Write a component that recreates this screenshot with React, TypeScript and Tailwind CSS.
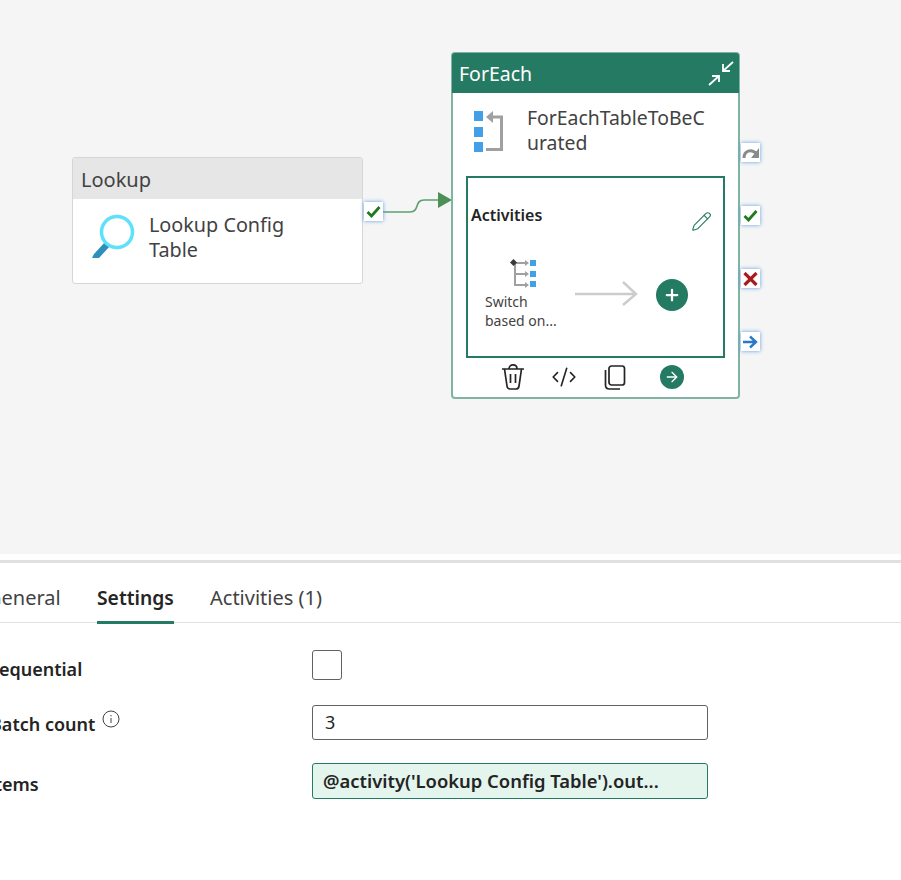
import { CodeXml, Pencil, Plus, ArrowRight } from 'lucide-react';

const font = "font-['Noto_Sans',sans-serif]";

function LookupIcon() {
  return (
    <svg width="44" height="46" viewBox="0 0 44 46" className="shrink-0">
      <path d="M15 28 L3 41 L1 45 L8 45 L19 33 Z" fill="#2d8fbb" />
      <circle cx="26" cy="19" r="15.5" fill="#fff" stroke="#5fe0fb" strokeWidth="3.5" />
    </svg>
  );
}

function ForEachIcon() {
  return (
    <svg width="32" height="42" viewBox="0 0 32 42" className="shrink-0">
      <rect x="0" y="0" width="9" height="10" fill="#42a0e8" />
      <rect x="0" y="16" width="9" height="10" fill="#42a0e8" />
      <rect x="0" y="31" width="9" height="10" fill="#42a0e8" />
      <path d="M12 38.5 H27.5 V6 H17" fill="none" stroke="#a0a0a0" strokeWidth="3" />
      <path d="M19 0 L12 6 L19 12 Z" fill="#a0a0a0" />
    </svg>
  );
}

function CollapseIcon() {
  return (
    <svg width="30" height="30" viewBox="0 0 30 30" fill="none" stroke="#ffffff" strokeWidth="1.8" className="mr-[3px] -mt-[1px]">
      <path d="M3 26 L13 17 M6 17 H13 V23" />
      <path d="M27 3 L17 12 M17 5 V12 H24" />
    </svg>
  );
}

function SwitchIcon() {
  return (
    <svg width="28" height="30" viewBox="0 0 28 30">
      <path d="M4 5 H18 M6 5 V27 H18 M6 16 H18" fill="none" stroke="#a0a0a0" strokeWidth="2" />
      <path d="M16 2 L20 5 L16 8 Z M16 13 L20 16 L16 19 Z M16 24 L20 27 L16 30 Z" fill="#a0a0a0" />
      <path d="M4.5 1 L8 4.5 L4.5 8 L1 4.5 Z" fill="#3a3a3a" />
      <rect x="21" y="2" width="6" height="6" fill="#42a0e8" />
      <rect x="21" y="13" width="6" height="6" fill="#42a0e8" />
      <rect x="21" y="23" width="6" height="6" fill="#42a0e8" />
    </svg>
  );
}

function Port({ className, children }: { className: string; children: React.ReactNode }) {
  return (
    <div className={`absolute w-[19px] h-[19px] bg-white flex items-center justify-center shadow-[0_0_4px_#5f9ae2] ${className}`}>
      {children}
    </div>
  );
}

function Check() {
  return (
    <svg width="15" height="13" viewBox="0 0 15 13">
      <path d="M1.5 7 L5.5 11 L13.5 2" fill="none" stroke="#1f7a1f" strokeWidth="2.8" />
    </svg>
  );
}

function TrashIcon() {
  return (
    <svg width="24" height="26" viewBox="0 0 24 26" fill="none" stroke="#242424" strokeWidth="1.7">
      <path d="M1 5 H23 M8 5 C8 -0.5 16 -0.5 16 5 M3.5 5 L6 22 C6.3 24 7.5 25 9 25 H15 C16.5 25 17.7 24 18 22 L20.5 5 M9.5 10 V19 M14.5 10 V19" />
    </svg>
  );
}

function CopyIcon() {
  return (
    <svg width="22" height="25" viewBox="0 0 22 25" fill="none" stroke="#242424" strokeWidth="1.7">
      <rect x="5" y="1" width="15.5" height="19" rx="2.5" />
      <path d="M1.5 5 V20 C1.5 22.5 3 24 5.5 24 H16" />
    </svg>
  );
}

export default function App() {
  return (
    <div className={`${font} w-[901px] h-[880px] bg-white overflow-hidden text-[#242424]`}>
      <div className="relative h-[554px] bg-[#f5f5f5]">
        {/* connector */}
        <svg width="80" height="30" viewBox="0 0 80 30" className="absolute left-[380px] top-[188px]">
          <path d="M3 24 H30 C40 24 34 12 44 12 H60" fill="none" stroke="#5f9f6f" strokeWidth="1.6" />
          <path d="M58 4 L72 12 L58 20 Z" fill="#4c8f57" />
        </svg>

        {/* lookup node */}
        <div className="absolute left-[72px] top-[157px] w-[291px] h-[127px] rounded-[3px] bg-white border border-[#d6d6d6] overflow-hidden">
          <div className="h-[41px] bg-[#e6e6e6] pl-2 pt-[2px] flex items-center text-[20px] text-[#424242]">Lookup</div>
          <div className="flex items-start pl-[18px] pt-[14px] gap-[14px]">
            <LookupIcon />
            <div className="text-[19.8px] leading-[25px] text-[#424242] w-[170px] -mt-[1px]">Lookup Config Table</div>
          </div>
        </div>
        <Port className="left-[364px] top-[202px]"><Check /></Port>

        {/* foreach node */}
        <div className="absolute left-[451px] top-[52px] w-[289px] h-[347px] rounded-[4px] bg-white border-2 border-[#7fb3a3] flex flex-col">
          <div className="h-[40px] bg-[#257a63] -mx-[1px] -mt-[1px] rounded-t-[3px] pl-[7px] pt-[2px] flex items-center justify-between text-white text-[19.5px]">
            <span>ForEach</span>
            <CollapseIcon />
          </div>
          <div className="flex items-start pl-[21px] pt-[18px] gap-[21px] h-[83px] shrink-0">
            <ForEachIcon />
            <div className="text-[19.4px] leading-[25px] text-[#424242] w-[180px] break-all -mt-[6px]">ForEachTableToBeCurated</div>
          </div>
          <div className="mx-[13px] h-[182px] border-2 border-[#257a63] shrink-0 px-[3px]">
            <div className="flex justify-between items-start pt-[25px] pr-[11px] h-[47px]">
              <span className="text-[16px] leading-[24px] font-semibold">Activities</span>
              <Pencil size={21} strokeWidth={1.3} color="#257a63" className="mt-[8px] -mr-[3px]" />
            </div>
            <div className="flex items-start pl-[14px] pt-[33px]">
              <div className="w-[89px] shrink-0">
                <div className="pl-[24px]"><SwitchIcon /></div>
                <div className="w-[78px] text-[14px] leading-[19px] text-[#424242] mt-[4px]">Switch based on...</div>
              </div>
              <svg width="66" height="26" viewBox="0 0 66 26" className="mt-[22px] shrink-0">
                <path d="M1 14 H62 M49 2 L62 14 L49 25" fill="none" stroke="#cccccc" strokeWidth="2.4" />
              </svg>
              <div className="ml-[16px] mt-[21px] w-[32px] h-[32px] rounded-full bg-[#257a63] flex items-center justify-center">
                <Plus size={18} strokeWidth={3} color="#ffffff" />
              </div>
            </div>
          </div>
          <div className="flex items-center pl-[48px] pt-[6px]">
            <TrashIcon />
            <CodeXml size={26} strokeWidth={1.5} className="ml-[26px]" color="#242424" />
            <div className="ml-[27px]"><CopyIcon /></div>
            <div className="ml-[34px] w-[24px] h-[24px] rounded-full bg-[#257a63] flex items-center justify-center">
              <ArrowRight size={16} strokeWidth={2} color="#ffffff" />
            </div>
          </div>
        </div>

        <Port className="left-[741px] top-[143px]">
          <svg width="18" height="14" viewBox="0 0 18 14">
            <path d="M2 12 C2 5 9 2 15 8" fill="none" stroke="#8a8a8a" strokeWidth="3" />
            <path d="M17 2 V12 H9 Z" fill="#8a8a8a" />
          </svg>
        </Port>
        <Port className="left-[741px] top-[206px]"><Check /></Port>
        <Port className="left-[741px] top-[269px]">
          <svg width="15" height="14" viewBox="0 0 15 14">
            <path d="M1.5 1 L13.5 13 M13.5 1 L1.5 13" stroke="#a81c1c" strokeWidth="3.2" />
          </svg>
        </Port>
        <Port className="left-[741px] top-[332px]">
          <svg width="15" height="14" viewBox="0 0 15 14">
            <path d="M0 7 H12 M7 1.5 L13 7 L7 12.5" fill="none" stroke="#2a78c8" strokeWidth="2.4" />
          </svg>
        </Port>
      </div>

      <div className="h-[6px]" />
      <div className="h-[3px] bg-[#e0e0e0]" />

      <div className="h-[60px] border-b border-[#e0e0e0] flex items-stretch -ml-[13px] text-[20px] text-[#424242]">
        <div className="pt-[21px] w-[110px] shrink-0 leading-[28px]">General</div>
        <div className="pt-[21px] leading-[28px] text-[19.3px] font-semibold text-[#242424] border-b-[3px] border-[#257a63] h-[61px] w-[77px] shrink-0">Settings</div>
        <div className="pt-[21px] leading-[28px] ml-[36px]">Activities (1)</div>
      </div>

      <div className="pt-[27px] text-[18px] font-semibold">
        <div className="flex items-center h-[30px]">
          <div className="w-[312px] shrink-0 -ml-[11px] mr-[11px] pt-[8px]">Sequential</div>
          <div className="w-[30px] h-[30px] border border-[#616161] rounded-[3px]" />
        </div>
        <div className="flex items-center h-[35px] mt-[25px]">
          <div className="w-[312px] shrink-0 -ml-[10px] mr-[10px] flex items-start gap-[7px] pt-[3px]">
            <span>Batch count</span>
            <svg width="18" height="18" viewBox="0 0 18 18" fill="none" stroke="#424242" strokeWidth="1" className="-mt-[1px]">
              <circle cx="9" cy="9" r="8" />
              <path d="M9 8 V13 M9 5 V6.3" />
            </svg>
          </div>
          <div className="w-[396px] h-[35px] border border-[#616161] rounded-[3px] flex items-center pl-3 font-normal">3</div>
        </div>
        <div className="flex items-center h-[36px] mt-[23px]">
          <div className="w-[312px] shrink-0 -ml-[12px] mr-[12px] pt-[6px]">Items</div>
          <div className="w-[396px] h-[36px] border border-[#257a63] bg-[#e3f5ed] rounded-[3px] flex items-center pl-[10px] text-[18.4px]">@activity('Lookup Config Table').out...</div>
        </div>
      </div>
    </div>
  );
}
